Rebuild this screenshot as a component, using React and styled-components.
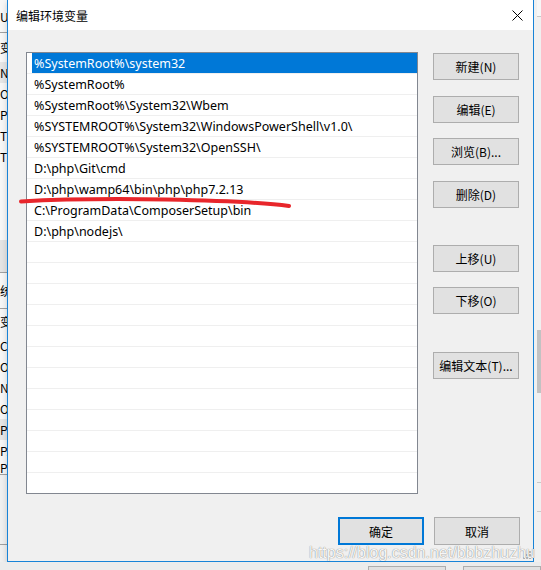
import React from "react";
import styled, { createGlobalStyle } from "styled-components";

const Global = createGlobalStyle`
  html, body { margin: 0; padding: 0; background: #f0f0f0; }
  * { box-sizing: border-box; }
`;

const UI_FONT = `"Noto Sans", "Noto Sans CJK SC", sans-serif`;
const CJK_FONT = `"Noto Sans CJK SC", "Noto Sans", sans-serif`;

const Screen = styled.div`
  position: relative;
  width: 541px;
  height: 570px;
  overflow: hidden;
  display: flex;
  flex-direction: column;
  background: #f0f0f0;
  font-family: ${UI_FONT};
  font-size: 12px;
  color: #000;
`;

const TopArea = styled.div`
  display: flex;
  height: 562px;
`;

const Strip = styled.div`
  width: 7px;
  flex: none;
  display: flex;
  flex-direction: column;
  overflow: hidden;
  background: #f0f0f0;
`;

const BgLine = styled.div`
  height: ${(p) => p.h}px;
  flex: none;
  line-height: ${(p) => p.h}px;
  white-space: nowrap;
  overflow: hidden;
  background: ${(p) => p.bg || "transparent"};
  border-bottom: ${(p) => (p.rule ? "1px solid #a0a0a0" : "none")};
  font-family: ${CJK_FONT};
  font-size: 12px;
`;

const ScrollThumb = styled.div`
  height: ${(p) => p.h}px;
  flex: none;
  margin-left: 3px;
  background: ${(p) => p.bg || "transparent"};
  border-bottom: ${(p) => (p.rule ? "1px solid #c8c8c8" : "none")};
`;

const Dialog = styled.div`
  width: 527px;
  flex: none;
  display: flex;
  flex-direction: column;
  border: 1px solid #1883d7;
  border-top: none;
  background: #f0f0f0;
  box-shadow: 0 2px 6px rgba(0, 0, 0, 0.18);
`;

const TitleBar = styled.div`
  height: 30px;
  flex: none;
  display: flex;
  align-items: center;
  justify-content: space-between;
  padding: 0 10px 0 8px;
  background: #fff;
`;

const Title = styled.span`
  font-family: ${CJK_FONT};
  font-size: 12px;
  color: #000;
`;

const Body = styled.div`
  flex: 1;
  display: flex;
  flex-direction: column;
  padding: 22px 13px 16px 18px;
  position: relative;
`;

const Main = styled.div`
  display: flex;
  gap: 15px;
  align-items: flex-start;
`;

const List = styled.div`
  width: 392px;
  height: 442px;
  border: 1px solid #828790;
  background: #fff;
  overflow: hidden;
  display: flex;
  flex-direction: column;
`;

const Row = styled.div`
  height: 21px;
  flex: none;
  display: flex;
  padding-left: 5px;
  border-bottom: 1px solid #efefef;
`;

const RowText = styled.div`
  flex: 1;
  display: flex;
  align-items: center;
  padding: 1px 0 0 2px;
  white-space: nowrap;
  background: ${(p) => (p.selected ? "#0078d7" : "transparent")};
  color: ${(p) => (p.selected ? "#fff" : "#000")};
  font-family: ${UI_FONT};
  font-size: 12.5px;
`;

const ButtonCol = styled.div`
  width: 86px;
  display: flex;
  flex-direction: column;
`;

const Btn = styled.div`
  width: 86px;
  height: ${(p) => p.h || 27}px;
  margin-top: ${(p) => p.gap || 0}px;
  flex: none;
  display: flex;
  align-items: center;
  justify-content: center;
  background: #e1e1e1;
  border: ${(p) => (p.primary ? "2px solid #0078d7" : "1px solid #adadad")};
  font-family: ${CJK_FONT};
  font-size: 12px;
  color: #000;
`;

const Footer = styled.div`
  margin-top: auto;
  display: flex;
  justify-content: flex-end;
  gap: 10px;
`;

const Grip = styled.svg`
  position: absolute;
  right: 2px;
  bottom: 2px;
`;

const BottomStrip = styled.div`
  height: 8px;
  display: flex;
  align-items: flex-start;
  padding-top: 4px;
  background: #ececec;
`;

const BottomBtn = styled.div`
  height: 10px;
  width: ${(p) => p.w}px;
  margin-left: ${(p) => p.ml}px;
  flex: none;
  background: #e1e1e1;
  border: 1px solid #adadad;
`;

const Mark = styled.svg`
  position: absolute;
  left: 16px;
  top: 193px;
  pointer-events: none;
`;

const Watermark = styled.div`
  position: absolute;
  left: 309px;
  top: 544px;
  font-family: "Liberation Sans", Arial, sans-serif;
  font-size: 16px;
  color: rgba(255, 255, 255, 0.95);
  text-shadow: 0 0 1px rgba(0, 0, 0, 0.45), 0 0 1px rgba(0, 0, 0, 0.2);
  white-space: nowrap;
  pointer-events: none;
`;

const entries = [
  "%SystemRoot%\\system32",
  "%SystemRoot%",
  "%SystemRoot%\\System32\\Wbem",
  "%SYSTEMROOT%\\System32\\WindowsPowerShell\\v1.0\\",
  "%SYSTEMROOT%\\System32\\OpenSSH\\",
  "D:\\php\\Git\\cmd",
  "D:\\php\\wamp64\\bin\\php\\php7.2.13",
  "C:\\ProgramData\\ComposerSetup\\bin",
  "D:\\php\\nodejs\\",
];

const rows = [...entries, ...Array(13).fill("")];

const leftBg = [
  { h: 33, t: "U", bg: "#f7f7f7", rule: true },
  { h: 29, t: "变", bg: "#f7f7f7" },
  { h: 21, t: "N", bg: "#e6e6e6" },
  { h: 21, t: "O", bg: "#f7f7f7" },
  { h: 21, t: "Pa", bg: "#f7f7f7" },
  { h: 21, t: "TE", bg: "#f7f7f7" },
  { h: 21, t: "TI", bg: "#f7f7f7" },
  { h: 73, t: "", bg: "#f7f7f7" },
  { h: 33, t: "", bg: "#e4e4e4", rule: true },
  { h: 36, t: "统", bg: "#f7f7f7", rule: true },
  { h: 26, t: "变", bg: "#f7f7f7" },
  { h: 21, t: "Co", bg: "#f7f7f7" },
  { h: 21, t: "O", bg: "#f7f7f7" },
  { h: 21, t: "N", bg: "#f7f7f7" },
  { h: 21, t: "O", bg: "#f7f7f7" },
  { h: 21, t: "Pa", bg: "#e6e6e6" },
  { h: 21, t: "PA", bg: "#f7f7f7" },
  { h: 14, t: "PR", bg: "#f7f7f7", rule: true },
  { h: 70, t: "", bg: "#f0f0f0", rule: true },
  { h: 15, t: "", bg: "#f0f0f0" },
];

const rightBg = [
  { h: 17, bg: "#f7f7f7", rule: true },
  { h: 313, bg: "#f0f0f0" },
  { h: 63, bg: "#c2c2c2" },
  { h: 90, bg: "#f0f0f0", rule: true },
  { h: 29, bg: "#f0f0f0", rule: true },
  { h: 50, bg: "#f0f0f0" },
];

const sideButtons = [
  { label: "新建(N)", gap: 1 },
  { label: "编辑(E)", gap: 16 },
  { label: "浏览(B)...", gap: 15 },
  { label: "删除(D)", gap: 16 },
  { label: "上移(U)", gap: 37 },
  { label: "下移(O)", gap: 15 },
  { label: "编辑文本(T)...", gap: 38 },
];

export default function App() {
  return (
    <>
      <Global />
      <Screen>
        <TopArea>
          <Strip>
            {leftBg.map((l, i) => (
              <BgLine key={i} h={l.h} bg={l.bg} rule={l.rule}>
                {l.t}
              </BgLine>
            ))}
          </Strip>
          <Dialog>
            <TitleBar>
              <Title>编辑环境变量</Title>
              <svg width="11" height="11" viewBox="0 0 11 11">
                <path d="M0.5 0.5 L10.5 10.5 M10.5 0.5 L0.5 10.5" stroke="#000" strokeWidth="1" />
              </svg>
            </TitleBar>
            <Body>
              <Main>
                <List>
                  {rows.map((r, i) => (
                    <Row key={i}>
                      <RowText selected={i === 0}>{r}</RowText>
                    </Row>
                  ))}
                </List>
                <ButtonCol>
                  {sideButtons.map((b) => (
                    <Btn key={b.label} gap={b.gap}>
                      {b.label}
                    </Btn>
                  ))}
                </ButtonCol>
              </Main>
              <Footer>
                <Btn primary h={28}>确定</Btn>
                <Btn h={28}>取消</Btn>
              </Footer>
              <Grip width="9" height="9" viewBox="0 0 9 9">
                {[
                  [7, 1], [7, 4], [4, 4], [7, 7], [4, 7], [1, 7],
                ].map(([x, y], i) => (
                  <rect key={i} x={x} y={y} width="2" height="2" fill="#b8b8b8" />
                ))}
              </Grip>
            </Body>
          </Dialog>
          <Strip>
            {rightBg.map((l, i) => (
              <ScrollThumb key={i} h={l.h} bg={l.bg} rule={l.rule} />
            ))}
          </Strip>
        </TopArea>
        <BottomStrip>
          <BottomBtn ml={368} w={78} />
          <BottomBtn ml={17} w={78} />
        </BottomStrip>
        <Mark width="280" height="20" viewBox="0 0 280 20">
          <path
            d="M5 8.5 C40 6.5 90 5.5 150 6.5 C200 7.5 240 8.5 273 13"
            stroke="#e8262b"
            strokeWidth="4"
            strokeLinecap="round"
            fill="none"
          />
        </Mark>
        <Watermark>https://blog.csdn.net/bbbzhuzhu</Watermark>
      </Screen>
    </>
  );
}
